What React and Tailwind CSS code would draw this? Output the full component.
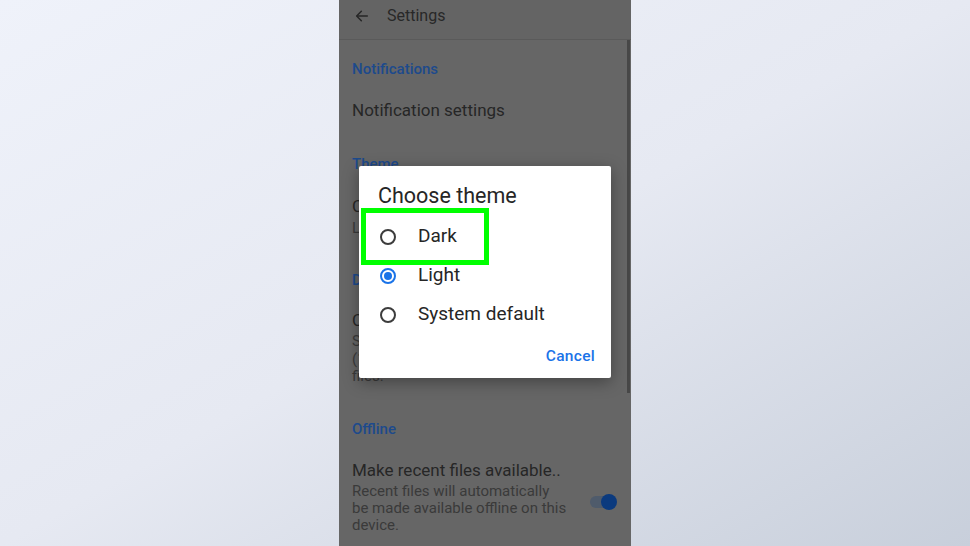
import React from 'react';

function Radio({ checked }) {
    return checked ? (
        <span className="w-4 h-4 rounded-full border-2 border-[#1a73e8] flex items-center justify-center shrink-0">
            <span className="w-2 h-2 rounded-full bg-[#1a73e8]" />
        </span>
    ) : (
        <span className="w-4 h-4 rounded-full border-2 border-[#3c3c3c] shrink-0" />
    );
}

export default function App() {
    const options = [
        { label: 'Dark', checked: false },
        { label: 'Light', checked: true },
        { label: 'System default', checked: false },
    ];

    return (
        <div className="w-[970px] h-[546px] flex justify-center bg-gradient-to-br from-[#eff2fa] via-[#e6e9f2] to-[#c8cfdb] font-['Roboto',sans-serif] overflow-hidden">
            <div className="relative w-[292px] h-full bg-[#666666] flex flex-col">
                {/* header */}
                <div className="h-[40px] flex items-start border-b border-[#5a5a5a] bg-[#646464] shrink-0">
                    <svg className="ml-[15px] mt-[8px]" width="16" height="16" viewBox="0 0 24 24" fill="none" stroke="#262626" strokeWidth="2.2" strokeLinecap="round" strokeLinejoin="round">
                        <path d="M20 12H5" />
                        <path d="M11 5l-7 7 7 7" />
                    </svg>
                    <span className="ml-[17px] mt-[4px] text-[16px] leading-[24px] text-[#282828]">Settings</span>
                </div>

                <div className="flex flex-1 min-h-0">
                    <div className="flex-1 pl-[13px] flex flex-col">
                        <p className="mt-[19px] text-[15px] leading-[20px] font-medium text-[#1d4a8c]">Notifications</p>
                        <p className="mt-[19px] text-[17px] leading-[24px] text-[#262626]">Notification settings</p>

                        <p className="mt-[32px] text-[15px] leading-[20px] font-medium text-[#1d4a8c]">Theme</p>
                        <p className="mt-[20px] text-[17px] leading-[24px] text-[#262626]">Choose theme</p>
                        <p className="text-[15px] leading-[20px] text-[#3a3a3a]">Light</p>

                        <p className="mt-[32px] text-[15px] leading-[20px] font-medium text-[#1d4a8c]">Documents cache</p>
                        <p className="mt-[18px] text-[17px] leading-[24px] text-[#262626]">Clear cache</p>
                        <p className="mt-[1px] text-[15px] leading-[17.5px] text-[#3a3a3a]">
                            Storage used by cached
                            <br />
                            (12 MB). Clears temporary
                            <br />
                            files.
                        </p>

                        <p className="mt-[33px] text-[15px] leading-[20px] font-medium text-[#1d4a8c]">Offline</p>
                        <p className="mt-[19px] text-[17px] leading-[24px] text-[#262626] whitespace-nowrap">Make recent files available..</p>
                        <div className="flex items-center">
                            <p className="mt-[1px] w-[224px] text-[15px] leading-[17px] text-[#3a3a3a]">
                                Recent files will automatically
                                <br />
                                be made available offline on this
                                <br />
                                device.
                            </p>
                            <div className="ml-[14px] -mt-[12px] relative w-[27px] h-[16px] flex items-center">
                                <span className="w-[22px] h-[12px] rounded-full bg-[#4f5b6b]" />
                                <span className="absolute right-0 w-[16px] h-[16px] rounded-full bg-[#0b3a7e]" />
                            </div>
                        </div>
                    </div>
                    <div className="w-[3px] h-[353px] bg-[#474747] mr-[1px]" />
                </div>

                {/* dialog */}
                <div className="absolute left-[20px] top-[166px] w-[252px] h-[212px] bg-white rounded-[2px] shadow-[0_4px_16px_rgba(0,0,0,0.35)] flex flex-col">
                    <p className="pl-[19px] pt-[16px] text-[21.5px] leading-[28px] text-[#262626]">Choose theme</p>
                    <div className="mt-[7px] flex flex-col">
                        {options.map((o) => (
                            <div key={o.label} className="h-[39px] flex items-center pl-[21px]">
                                <Radio checked={o.checked} />
                                <span className="ml-[22px] text-[19px] text-[#262626]">{o.label}</span>
                            </div>
                        ))}
                    </div>
                    <div className="mt-[12px] flex justify-end pr-[16px]">
                        <span className="text-[15.5px] leading-[20px] font-medium tracking-[0.3px] text-[#1a73e8]">Cancel</span>
                    </div>
                </div>

                {/* highlight annotation */}
                <div className="absolute left-[22px] top-[208px] w-[128px] h-[57px] border-[5px] border-[#00ff00]" />
            </div>
        </div>
    );
}
